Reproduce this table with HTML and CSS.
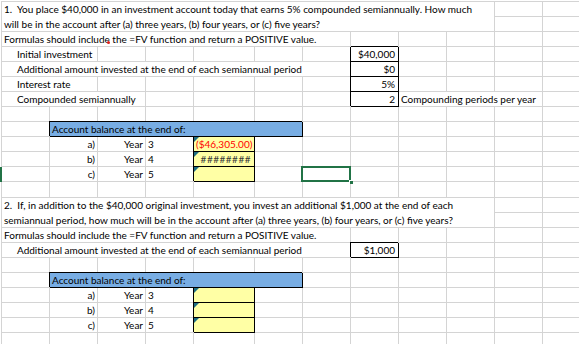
FILE: index.html
```html
<!DOCTYPE html>
<html>
<head>
<meta charset="utf-8">
<link rel="stylesheet" href="styles.css">
</head>
<body>
<div class="sheet">
  <!-- rows 1-2 -->
  <div class="c m2 s10">1.&nbsp; You place $40,000 in an investment account today that earns 5% compounded semiannually. How much<br>will be in the account after (a) three years, (b) four years, or (c) five years?</div>
  <div class="c"></div><div class="c"></div>
  <div class="c"></div><div class="c"></div>
  <!-- row 3 -->
  <div class="c s7 rel">Formulas should include the =FV function and return a POSITIVE value.<span class="dot"></span></div>
  <div class="c"></div><div class="c"></div><div class="c"></div><div class="c"></div><div class="c"></div>
  <!-- row 4 -->
  <div class="c s2 in">Initial investment</div>
  <div class="c"></div><div class="c"></div><div class="c"></div><div class="c"></div><div class="c"></div>
  <div class="c box r">$40,000</div>
  <div class="c"></div><div class="c"></div><div class="c"></div><div class="c"></div>
  <!-- row 5 -->
  <div class="c s7 in">Additional amount invested at the end of each semiannual period</div>
  <div class="c box r">$0</div>
  <div class="c"></div><div class="c"></div><div class="c"></div><div class="c"></div>
  <!-- row 6 -->
  <div class="c s2 in">Interest rate</div>
  <div class="c"></div><div class="c"></div><div class="c"></div><div class="c"></div><div class="c"></div>
  <div class="c box r">5%</div>
  <div class="c"></div><div class="c"></div><div class="c"></div><div class="c"></div>
  <!-- row 7 -->
  <div class="c s3 in">Compounded semiannually</div>
  <div class="c"></div><div class="c"></div><div class="c"></div><div class="c"></div>
  <div class="c box r">2</div>
  <div class="c s3">Compounding periods per year</div>
  <div class="c"></div>
  <!-- row 8 -->
  <div class="c"></div><div class="c"></div><div class="c"></div><div class="c"></div><div class="c"></div><div class="c"></div>
  <div class="c"></div><div class="c"></div><div class="c"></div><div class="c"></div><div class="c"></div><div class="c"></div>
  <!-- row 9 -->
  <div class="c"></div>
  <div class="c s5 hd">Account balance at the end of:</div>
  <div class="c"></div><div class="c"></div><div class="c"></div><div class="c"></div><div class="c"></div><div class="c"></div>
  <!-- row 10 -->
  <div class="c"></div>
  <div class="c r">a)</div><div class="c r">Year</div><div class="c">3</div>
  <div class="c yl r neg">($46,305.00)</div>
  <div class="c"></div><div class="c"></div><div class="c"></div><div class="c"></div><div class="c"></div><div class="c"></div><div class="c"></div>
  <!-- row 11 -->
  <div class="c"></div>
  <div class="c r">b)</div><div class="c r">Year</div><div class="c">4</div>
  <div class="c yl r hash">########</div>
  <div class="c"></div><div class="c"></div><div class="c"></div><div class="c"></div><div class="c"></div><div class="c"></div><div class="c"></div>
  <!-- row 12 -->
  <div class="c rowsel"></div>
  <div class="c r">c)</div><div class="c r">Year</div><div class="c">5</div>
  <div class="c yl"></div>
  <div class="c"></div>
  <div class="c sel"></div>
  <div class="c"></div><div class="c"></div><div class="c"></div><div class="c"></div><div class="c"></div>
  <!-- row 13 -->
  <div class="c"></div><div class="c"></div><div class="c"></div><div class="c"></div><div class="c"></div><div class="c"></div>
  <div class="c"></div><div class="c"></div><div class="c"></div><div class="c"></div><div class="c"></div><div class="c"></div>
  <!-- rows 14-15 -->
  <div class="c m2 s10">2.&nbsp; If, in addition to the $40,000 original investment, you invest an additional $1,000 at the end of each<br>semiannual period, how much will be in the account after (a) three years, (b) four years, or (c) five years?</div>
  <div class="c"></div><div class="c"></div>
  <div class="c"></div><div class="c"></div>
  <!-- row 16 -->
  <div class="c s7">Formulas should include the =FV function and return a POSITIVE value.</div>
  <div class="c"></div><div class="c"></div><div class="c"></div><div class="c"></div><div class="c"></div>
  <!-- row 17 -->
  <div class="c s7 in">Additional amount invested at the end of each semiannual period</div>
  <div class="c box r">$1,000</div>
  <div class="c"></div><div class="c"></div><div class="c"></div><div class="c"></div>
  <!-- row 18 -->
  <div class="c"></div><div class="c"></div><div class="c"></div><div class="c"></div><div class="c"></div><div class="c"></div>
  <div class="c"></div><div class="c"></div><div class="c"></div><div class="c"></div><div class="c"></div><div class="c"></div>
  <!-- row 19 -->
  <div class="c"></div>
  <div class="c s5 hd">Account balance at the end of:</div>
  <div class="c"></div><div class="c"></div><div class="c"></div><div class="c"></div><div class="c"></div><div class="c"></div>
  <!-- row 20 -->
  <div class="c"></div>
  <div class="c r">a)</div><div class="c r">Year</div><div class="c">3</div>
  <div class="c yl"></div>
  <div class="c"></div><div class="c"></div><div class="c"></div><div class="c"></div><div class="c"></div><div class="c"></div><div class="c"></div>
  <!-- row 21 -->
  <div class="c"></div>
  <div class="c r">b)</div><div class="c r">Year</div><div class="c">4</div>
  <div class="c yl"></div>
  <div class="c"></div><div class="c"></div><div class="c"></div><div class="c"></div><div class="c"></div><div class="c"></div><div class="c"></div>
  <!-- row 22 -->
  <div class="c"></div>
  <div class="c r">c)</div><div class="c r">Year</div><div class="c">5</div>
  <div class="c yl"></div>
  <div class="c"></div><div class="c"></div><div class="c"></div><div class="c"></div><div class="c"></div><div class="c"></div><div class="c"></div>
  <!-- row 23 -->
  <div class="c"></div><div class="c"></div><div class="c"></div><div class="c"></div><div class="c"></div><div class="c"></div>
  <div class="c"></div><div class="c"></div><div class="c"></div><div class="c"></div><div class="c"></div><div class="c"></div>
</div>
</body>
</html>
```

FILE: styles.css
```css
html, body {
  margin: 0;
  padding: 0;
  background: #fff;
  overflow: hidden;
}

body {
  font-family: Lato, "Liberation Sans", sans-serif;
  font-size: 10px;
  color: #000;
}

.sheet {
  display: grid;
  grid-template-columns: repeat(4, 48px) 61px repeat(7, 48px);
  grid-template-rows: repeat(12, 15px) 16px repeat(10, 15px);
  width: max-content;
  margin: 1px 0 0 1px;
  border-left: 1px solid #d4d4d4;
  border-top: 1px solid #d4d4d4;
}

.c {
  box-sizing: border-box;
  border-right: 1px solid #d4d4d4;
  border-bottom: 1px solid #d4d4d4;
  padding: 0 2px;
  line-height: 14px;
  white-space: nowrap;
  overflow: visible;
}

.m2 { grid-row: span 2; line-height: 15px; }
.s2 { grid-column: span 2; }
.s3 { grid-column: span 3; }
.s5 { grid-column: span 5; }
.s7 { grid-column: span 7; }
.s10 { grid-column: span 10; }

.in { padding-left: 15px; }
.r { text-align: right; }
.rel { position: relative; }

.box {
  border-right-color: #000;
  border-bottom-color: #000;
  box-shadow: -1px -1px 0 #000;
  padding-right: 3px;
}

.hd {
  background: #78ade3;
  border-right-color: #000;
  border-bottom-color: #000;
  box-shadow: -1px -1px 0 #000;
}

.yl {
  position: relative;
  background: #ffffa5;
  border-right-color: #000;
  border-bottom-color: #000;
  box-shadow: -1px -1px 0 #000;
}

.yl::before {
  content: "";
  position: absolute;
  left: 0;
  top: 0;
  border-style: solid;
  border-width: 5px 5px 0 0;
  border-color: #1f6e82 transparent transparent transparent;
}

.neg { color: #ff0000; }
.hash { color: #3a3a3a; padding-right: 3px; letter-spacing: 0.5px; }

.dot {
  position: absolute;
  left: 105px;
  top: 9px;
  width: 3px;
  height: 3px;
  border-radius: 50%;
  background: #e0201a;
}

.rowsel { box-shadow: -2px 0 0 #217346; }

.sel { position: relative; }

.sel::after {
  content: "";
  position: absolute;
  left: -2px;
  top: -1px;
  right: -1px;
  bottom: -1px;
  border: 2px solid #217346;
}

.sel::before {
  content: "";
  position: absolute;
  right: -3px;
  bottom: -3px;
  width: 3px;
  height: 3px;
  background: #217346;
  border-left: 1px solid #fff;
  border-top: 1px solid #fff;
  z-index: 1;
}
```
